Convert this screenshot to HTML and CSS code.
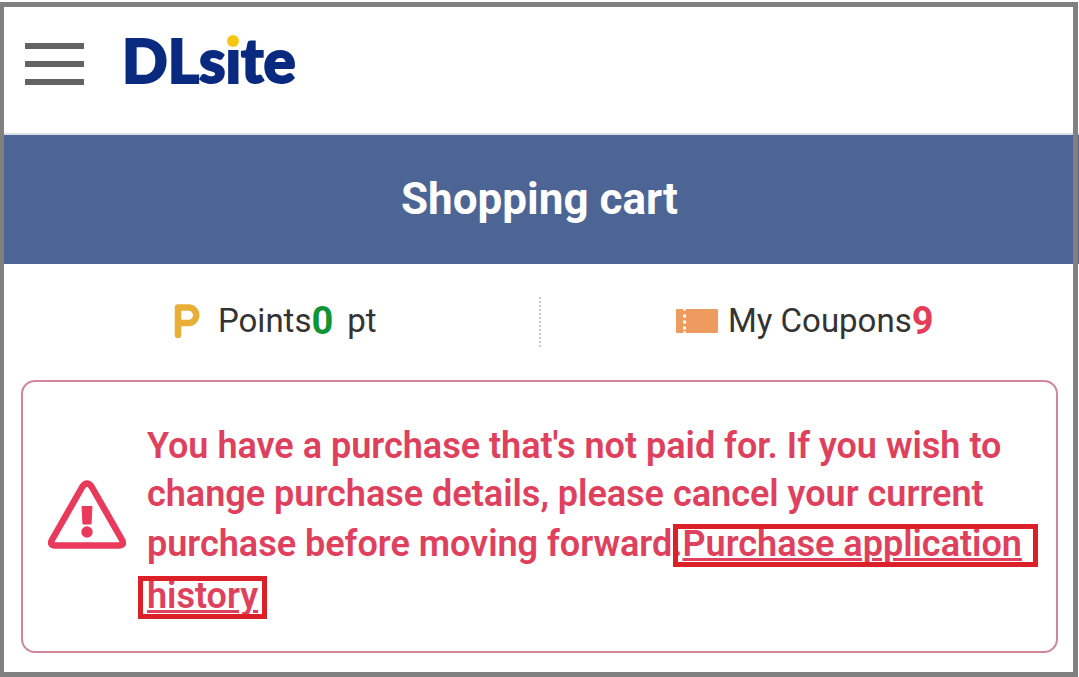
FILE: index.html
```html
<!DOCTYPE html>
<html lang="en">
  <head>
    <meta charset="UTF-8" />
    <meta name="viewport" content="width=device-width, initial-scale=1.0" />
    <title>Shopping cart | DLsite</title>
    <link rel="stylesheet" href="styles.css">
  </head>
  <body>
    <div class="page">
      <header class="header">
        <button class="menu-button" type="button" aria-label="Menu">
          <span class="menu-line"></span>
          <span class="menu-line"></span>
          <span class="menu-line"></span>
        </button>
        <a class="logo" href="#">
          <svg width="180" height="80" viewBox="0 0 180 80">
            <text class="logo-text" x="-3" y="54">DLsite</text>
            <circle cx="108" cy="13" r="8" fill="#fff" />
            <circle cx="108" cy="12" r="6" fill="#f6c714" />
          </svg>
        </a>
      </header>

      <main>
        <h1 class="title">Shopping cart</h1>

        <div class="stats">
          <div class="stat">
            <svg class="point-icon" width="26" height="34" viewBox="0 0 26 34">
              <path d="M4 31V3.500H14.500a7.500 7.500 0 0 1 0 15.500H4" fill="none" stroke="#e9ae35" stroke-width="6.500" stroke-linecap="round" stroke-linejoin="round" />
            </svg>
            <span>Points</span><strong class="count green">0</strong><span class="unit">pt</span>
          </div>
          <div class="stat">
            <svg class="coupon-icon" width="42" height="24" viewBox="0 0 42 24">
              <rect width="42" height="24" rx="1" fill="#ee9b60" />
              <path d="M8.500 0v24" stroke="#fff" stroke-width="3" stroke-dasharray="1.500 4 3 3 3 3 3 2 2" />
            </svg>
            <span>My Coupons</span><strong class="count red">9</strong>
          </div>
        </div>

        <section class="alert">
          <svg class="alert-icon" width="78" height="70" viewBox="0 0 78 70">
            <path d="M34.500 6.500 4.200 59.500Q1 65.500 7 65.500H71Q77 65.500 73.800 59.500L43.500 6.500Q39 0.500 34.500 6.500Z" fill="none" stroke="#ea3a5b" stroke-width="6.500" stroke-linejoin="round" />
            <path d="M34 26.500H44L43 44H35Z" fill="#ea3a5b" stroke="#ea3a5b" stroke-linejoin="round" />
            <circle cx="39" cy="52" r="5.700" fill="#ea3a5b" />
          </svg>
          <p class="alert-text">
            You have a purchase that's not paid for. If you wish to change purchase details, please cancel your current purchase before moving forward.<a class="history-link" href="#"><span class="mark mark-wide">Purchase application</span> <span class="mark">history</span></a>
          </p>
        </section>
      </main>
    </div>
  </body>
</html>
```
FILE: styles.css
```css
* {
  box-sizing: border-box;
}

body {
  margin: 0;
  background-color: #fff;
  color: #333;
  font-family: Roboto, "Liberation Sans", sans-serif;
}

.page {
  position: relative;
  min-height: 100vh;
  padding: 7px 0 24px 4px;
}

/* grey frame over the whole page */
.page::after {
  content: "";
  position: absolute;
  inset: 2px 1px 0 0;
  border: 5px solid #808080;
  border-left-width: 4px;
  pointer-events: none;
}

.header {
  display: flex;
  align-items: flex-start;
  gap: 41px;
  height: 128px;
  padding: 22px 21px 0;
  border-bottom: 2px solid #d9dde8;
}

.menu-button {
  display: flex;
  flex-direction: column;
  gap: 12px;
  margin-top: 14px;
  padding: 0;
  border: none;
  background: none;
}

.menu-line {
  width: 59px;
  height: 6px;
  background-color: #636363;
}

.logo svg {
  display: block;
  overflow: visible;
}

.logo-text {
  fill: #0a2a80;
  stroke: #0a2a80;
  stroke-width: 2px;
  font-family: Lato, sans-serif;
  font-size: 60px;
  font-weight: 900;
}

.title {
  margin: 0;
  padding: 38px 4px 39px 0;
  background-color: #4d6594;
  color: #fff;
  font-size: 44px;
  font-weight: 700;
  line-height: 52px;
  text-align: center;
}

.stats {
  display: grid;
  grid-template-columns: 1fr 1fr;
  margin-top: 33px;
  padding: 0 12px 0 6px;
}

.stat {
  display: flex;
  align-items: center;
  justify-content: center;
  height: 50px;
  padding: 0 0 2px 2px;
  font-size: 33px;
  line-height: 48px;
}

.stat + .stat {
  border-left: 2px dotted #c8c8c8;
}

.point-icon {
  margin-right: 18px;
}

.coupon-icon {
  margin-right: 10px;
}

.count {
  font-size: 38px;
}

.unit {
  margin-left: 14px;
}

.green {
  color: #0f9535;
}

.red {
  color: #e63c5a;
}

.alert {
  display: flex;
  align-items: flex-start;
  gap: 21px;
  margin: 33px 21px 0 17px;
  padding: 40px 18px 29px 25px;
  border: 2px solid #cf8799;
  border-radius: 14px;
}

.alert-icon {
  flex: none;
  margin-top: 58px;
}

.alert-text {
  margin: 0;
  color: #df405d;
  font-size: 36px;
  font-weight: 600;
  line-height: 48px;
}

.history-link {
  color: inherit;
  text-decoration: none;
}

.mark {
  position: relative;
  display: inline-block;
  line-height: 52px;
  text-decoration: underline;
  text-decoration-thickness: 3px;
}

/* red box around each part of the link */
.mark::after {
  content: "";
  position: absolute;
  inset: 6px -9px 3px;
  border: 5px solid #dc2028;
}

.mark-wide::after {
  right: -16px;
}
```
